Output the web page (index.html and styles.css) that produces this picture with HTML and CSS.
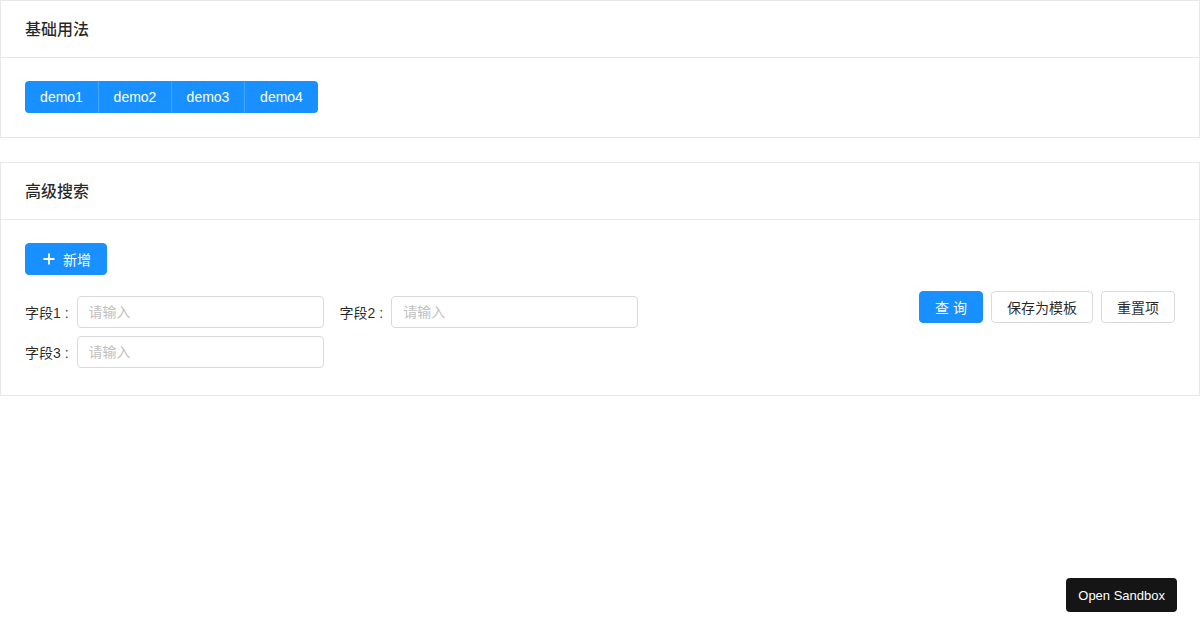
FILE: index.html
```html
<!DOCTYPE html>
<html lang="zh-CN">
<head>
<meta charset="utf-8">
<title>Demo</title>
<link rel="stylesheet" href="styles.css">
</head>
<body>
<div class="page">
  <section class="card">
    <div class="card-head">基础用法</div>
    <div class="card-body">
      <div class="seg">
        <span class="seg-item">demo1</span>
        <span class="seg-item">demo2</span>
        <span class="seg-item">demo3</span>
        <span class="seg-item">demo4</span>
      </div>
    </div>
  </section>

  <section class="card">
    <div class="card-head">高级搜索</div>
    <div class="card-body card-body-form">
      <button class="btn btn-primary btn-add">
        <svg class="plus" width="12" height="12" viewBox="0 0 12 12"><path d="M6 0.5V11.5M0.5 6H11.5" stroke="#fff" stroke-width="1.8" fill="none"/></svg>
        <span>新增</span>
      </button>
      <div class="search">
        <div class="fields">
          <div class="field"><label class="label">字段1 :</label><input class="input" placeholder="请输入"></div>
          <div class="field"><label class="label">字段2 :</label><input class="input" placeholder="请输入"></div>
          <div class="field"><label class="label">字段3 :</label><input class="input" placeholder="请输入"></div>
        </div>
        <div class="actions">
          <button class="btn btn-primary">查 询</button>
          <button class="btn">保存为模板</button>
          <button class="btn">重置项</button>
        </div>
      </div>
    </div>
  </section>
</div>
<button class="sandbox">Open Sandbox</button>
</body>
</html>
```
FILE: styles.css
```css
* { box-sizing: border-box; }
html, body { margin: 0; padding: 0; background: #fff; }
body {
  font-family: "Liberation Sans", Arial, "Noto Sans CJK SC", sans-serif;
  font-size: 14px;
  color: rgba(0, 0, 0, 0.85);
}
.page {
  display: flex;
  flex-direction: column;
  gap: 24px;
}
.card {
  border: 1px solid #e8e8e8;
  background: #fff;
}
.card-head {
  height: 57px;
  padding: 0 24px 3px;
  display: flex;
  align-items: center;
  font-size: 16px;
  font-weight: 500;
  color: rgba(0, 0, 0, 0.85);
  border-bottom: 1px solid #e8e8e8;
}
.card-body {
  padding: 23px 24px 24px;
}
.card-body-form { padding-bottom: 27px; }
.seg {
  display: inline-flex;
  background: #1890ff;
  border-radius: 4px;
  overflow: hidden;
  height: 32px;
}
.seg-item {
  display: flex;
  align-items: center;
  justify-content: center;
  width: 73px;
  color: #fff;
  font-size: 14px;
  border-left: 1px solid #40a9ff;
}
.seg-item:first-child { border-left: none; }
.seg-item:last-child { width: 74px; }
.btn {
  height: 32px;
  padding: 0 15px;
  border: 1px solid #d9d9d9;
  border-radius: 4px;
  background: #fff;
  color: rgba(0, 0, 0, 0.85);
  font-family: inherit;
  font-size: 14px;
  display: inline-flex;
  align-items: center;
  justify-content: center;
  gap: 8px;
  cursor: pointer;
}
.btn-primary {
  background: #1890ff;
  border-color: #1890ff;
  color: #fff;
}
.btn-add { padding: 0 15px 0 17px; }
.plus { display: block; }
.search {
  margin-top: 16px;
  display: flex;
  justify-content: space-between;
  align-items: flex-start;
}
.fields {
  margin-top: 5px;
  display: flex;
  flex-wrap: wrap;
  width: 640px;
  column-gap: 16px;
  row-gap: 8px;
}
.field {
  display: flex;
  align-items: center;
  gap: 8px;
}
.label {
  font-size: 14px;
  color: rgba(0, 0, 0, 0.85);
  white-space: nowrap;
}
.input {
  width: 247px;
  height: 32px;
  padding: 4px 11px;
  border: 1px solid #d9d9d9;
  border-radius: 4px;
  font-family: inherit;
  font-size: 14px;
  color: rgba(0, 0, 0, 0.85);
  outline: none;
}
.input::placeholder { color: #bfbfbf; }
.actions {
  display: flex;
  gap: 8px;
}
.sandbox {
  position: fixed;
  right: 23px;
  bottom: 18px;
  height: 34px;
  padding: 0 12px;
  border: none;
  border-radius: 4px;
  background: #151515;
  color: #fff;
  font-family: "Liberation Sans", Arial, sans-serif;
  font-size: 13px;
}
```
